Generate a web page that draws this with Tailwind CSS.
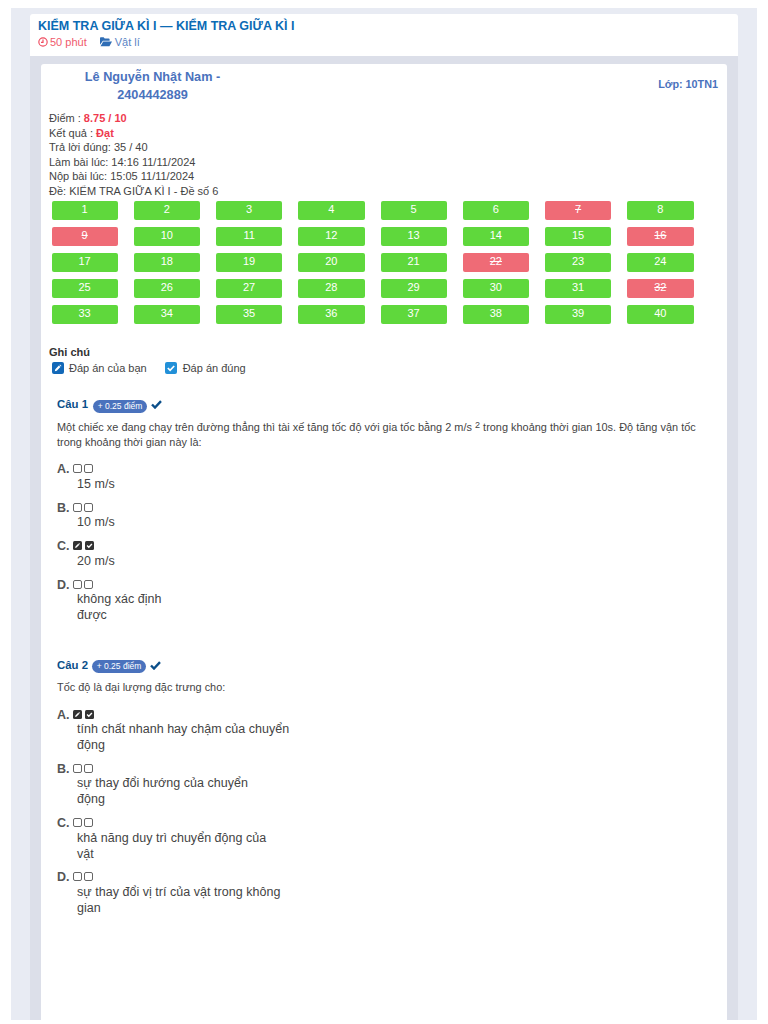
<!DOCTYPE html>
<html lang="en">
<head>
  <meta charset="UTF-8" />
  <title>Kết quả bài thi</title>
  <script src="https://cdn.jsdelivr.net/npm/@tailwindcss/browser@4"></script>
</head>
<body class="bg-white text-[#333] font-['Liberation_Sans',Arial,sans-serif] overflow-hidden">
<div class="ml-[11px] mr-[11px] mt-2 h-[1012px] bg-[#e8ebf3] px-[19px] pt-[6px] overflow-hidden">

  <!-- header -->
  <div class="h-[42px] bg-white rounded-t-[3px] pl-[8px] pt-[4px]">
    <h1 class="text-[12.5px] leading-[16px] font-bold text-[#0b6bb5]">KIỂM TRA GIỮA KÌ I — KIỂM TRA GIỮA KÌ I</h1>
    <div class="flex items-center text-[11px] leading-[14px] mt-[1px]">
      <svg class="w-[10px] h-[10px] mr-[2px]" viewBox="0 0 12 12" fill="none" stroke="#ef4b5f" stroke-width="1.4"><circle cx="6" cy="6" r="5"/><path d="M6 3v3.4H3.6"/></svg>
      <span class="text-[#ef5a6c]">50 phút</span>
      <svg class="w-[12px] h-[10px] ml-[13px] mr-[3px]" viewBox="0 0 14 11" fill="#2f6db5"><path d="M0 1.2C0 .5.5 0 1.2 0h3l1.3 1.4h4.7c.6 0 1 .4 1 1V4H3.4L0 8.6z"/><path d="M3.8 4.8H14l-3 5.6H0.6z"/></svg>
      <span class="text-[#5b83c4]">Vật lí</span>
    </div>
  </div>

  <!-- body -->
  <div class="h-[1000px] bg-[#dcdfe9] pt-[8px] px-[11px]">
    <div class="h-[1000px] bg-white rounded-[3px] pl-[8px] pr-[9px]">

      <!-- student -->
      <div class="flex justify-between">
        <div class="w-[205px] pl-[2px] pt-[4px] text-center text-[12.7px] leading-[18px] font-bold text-[#4a72bd]">Lê Nguyễn Nhật Nam -<br>2404442889</div>
        <div class="pt-[13px] text-[10.8px] leading-[14px] font-bold text-[#4a72bd]">Lớp: 10TN1</div>
      </div>

      <!-- result info -->
      <div class="mt-[7px] text-[11px] leading-[14.6px] text-[#444]">
        <p>Điểm : <b class="text-[#ef3a4e]">8.75 / 10</b></p>
        <p>Kết quả : <b class="text-[#ef3a4e]">Đạt</b></p>
        <p>Trả lời đúng: 35 / 40</p>
        <p>Làm bài lúc: 14:16 11/11/2024</p>
        <p>Nộp bài lúc: 15:05 11/11/2024</p>
        <p>Đề: KIỂM TRA GIỮA KÌ I - Đề số 6</p>
      </div>

      <!-- answer grid -->
      <div class="mt-[2px] ml-[2.5px] w-[642px] grid grid-cols-8 gap-x-[16px] gap-y-[7px] text-[11px] text-white text-center">
        <div class="h-[19px] leading-[17px] rounded-[2px] bg-[#5fd83c]">1</div>
        <div class="h-[19px] leading-[17px] rounded-[2px] bg-[#5fd83c]">2</div>
        <div class="h-[19px] leading-[17px] rounded-[2px] bg-[#5fd83c]">3</div>
        <div class="h-[19px] leading-[17px] rounded-[2px] bg-[#5fd83c]">4</div>
        <div class="h-[19px] leading-[17px] rounded-[2px] bg-[#5fd83c]">5</div>
        <div class="h-[19px] leading-[17px] rounded-[2px] bg-[#5fd83c]">6</div>
        <div class="h-[19px] leading-[17px] rounded-[2px] bg-[#ef6b76] line-through">7</div>
        <div class="h-[19px] leading-[17px] rounded-[2px] bg-[#5fd83c]">8</div>
        <div class="h-[19px] leading-[17px] rounded-[2px] bg-[#ef6b76] line-through">9</div>
        <div class="h-[19px] leading-[17px] rounded-[2px] bg-[#5fd83c]">10</div>
        <div class="h-[19px] leading-[17px] rounded-[2px] bg-[#5fd83c]">11</div>
        <div class="h-[19px] leading-[17px] rounded-[2px] bg-[#5fd83c]">12</div>
        <div class="h-[19px] leading-[17px] rounded-[2px] bg-[#5fd83c]">13</div>
        <div class="h-[19px] leading-[17px] rounded-[2px] bg-[#5fd83c]">14</div>
        <div class="h-[19px] leading-[17px] rounded-[2px] bg-[#5fd83c]">15</div>
        <div class="h-[19px] leading-[17px] rounded-[2px] bg-[#ef6b76] line-through">16</div>
        <div class="h-[19px] leading-[17px] rounded-[2px] bg-[#5fd83c]">17</div>
        <div class="h-[19px] leading-[17px] rounded-[2px] bg-[#5fd83c]">18</div>
        <div class="h-[19px] leading-[17px] rounded-[2px] bg-[#5fd83c]">19</div>
        <div class="h-[19px] leading-[17px] rounded-[2px] bg-[#5fd83c]">20</div>
        <div class="h-[19px] leading-[17px] rounded-[2px] bg-[#5fd83c]">21</div>
        <div class="h-[19px] leading-[17px] rounded-[2px] bg-[#ef6b76] line-through">22</div>
        <div class="h-[19px] leading-[17px] rounded-[2px] bg-[#5fd83c]">23</div>
        <div class="h-[19px] leading-[17px] rounded-[2px] bg-[#5fd83c]">24</div>
        <div class="h-[19px] leading-[17px] rounded-[2px] bg-[#5fd83c]">25</div>
        <div class="h-[19px] leading-[17px] rounded-[2px] bg-[#5fd83c]">26</div>
        <div class="h-[19px] leading-[17px] rounded-[2px] bg-[#5fd83c]">27</div>
        <div class="h-[19px] leading-[17px] rounded-[2px] bg-[#5fd83c]">28</div>
        <div class="h-[19px] leading-[17px] rounded-[2px] bg-[#5fd83c]">29</div>
        <div class="h-[19px] leading-[17px] rounded-[2px] bg-[#5fd83c]">30</div>
        <div class="h-[19px] leading-[17px] rounded-[2px] bg-[#5fd83c]">31</div>
        <div class="h-[19px] leading-[17px] rounded-[2px] bg-[#ef6b76] line-through">32</div>
        <div class="h-[19px] leading-[17px] rounded-[2px] bg-[#5fd83c]">33</div>
        <div class="h-[19px] leading-[17px] rounded-[2px] bg-[#5fd83c]">34</div>
        <div class="h-[19px] leading-[17px] rounded-[2px] bg-[#5fd83c]">35</div>
        <div class="h-[19px] leading-[17px] rounded-[2px] bg-[#5fd83c]">36</div>
        <div class="h-[19px] leading-[17px] rounded-[2px] bg-[#5fd83c]">37</div>
        <div class="h-[19px] leading-[17px] rounded-[2px] bg-[#5fd83c]">38</div>
        <div class="h-[19px] leading-[17px] rounded-[2px] bg-[#5fd83c]">39</div>
        <div class="h-[19px] leading-[17px] rounded-[2px] bg-[#5fd83c]">40</div>
      </div>

      <!-- legend -->
      <div class="mt-[21px] text-[11px] leading-[14px] font-bold text-[#333]">Ghi chú</div>
      <div class="mt-[2px] ml-[3px] flex items-center text-[11px] leading-[14px] text-[#444]">
        <svg class="w-[12px] h-[12px] mr-[5px]" viewBox="0 0 12 12"><rect width="12" height="12" rx="2" fill="#1268b8"/><path d="M2.8 9.2l.5-2 3.6-3.6 1.5 1.5-3.6 3.6z M7.4 3.1l.6-.6 1.5 1.5-.6.6z" fill="#fff"/></svg>
        <span>Đáp án của bạn</span>
        <svg class="w-[12px] h-[12px] ml-[18px] mr-[6px]" viewBox="0 0 12 12"><rect width="12" height="12" rx="2" fill="#2290d8"/><path d="M2.8 6l2.3 2.3 4.1-4.3" fill="none" stroke="#fff" stroke-width="1.7"/></svg>
        <span>Đáp án đúng</span>
      </div>

      <!-- question 1 -->
      <div class="mt-[23px] ml-[8px]">
        <div class="flex items-center h-[14px]">
          <span class="text-[11.4px] font-bold text-[#0b4f8a]">Câu 1</span>
          <span class="ml-[5px] mt-[3px] w-[54px] h-[13px] rounded-full bg-[#4a72bd] text-white text-[8.5px] leading-[13px] text-center">+ 0.25 điểm</span>
          <svg class="ml-[4px] w-[11px] h-[9px]" viewBox="0 0 11 9" fill="none" stroke="#0b4f8a" stroke-width="2.4"><path d="M1 4.5l3 3L10 1.2"/></svg>
        </div>
        <p class="mt-[8px] w-[660px] text-[10.9px] tracking-[0.02px] leading-[15.5px] text-[#444]">Một chiếc xe đang chạy trên đường thẳng thì tài xế tăng tốc độ với gia tốc bằng 2 m/s <span class="inline-block align-top text-[9px] leading-[11px]">2</span> trong khoảng thời gian 10s. Độ tăng vận tốc trong khoảng thời gian này là:</p>

        <div class="mt-[11px] flex items-center h-[14px]">
          <b class="text-[12.5px] text-[#555] mt-[2px]">A.</b>
          <span class="ml-[3px] w-[9px] h-[9px] border border-[#666] rounded-[2px]"></span>
          <span class="ml-[2px] w-[9px] h-[9px] border border-[#666] rounded-[2px]"></span>
        </div>
        <p class="ml-[20px] w-[220px] text-[12.5px] tracking-[0.03px] leading-[16px] text-[#444]">15 m/s</p>

        <div class="mt-[8.5px] flex items-center h-[14px]">
          <b class="text-[12.5px] text-[#555] mt-[2px]">B.</b>
          <span class="ml-[3px] w-[9px] h-[9px] border border-[#666] rounded-[2px]"></span>
          <span class="ml-[2px] w-[9px] h-[9px] border border-[#666] rounded-[2px]"></span>
        </div>
        <p class="ml-[20px] w-[220px] text-[12.5px] tracking-[0.03px] leading-[16px] text-[#444]">10 m/s</p>

        <div class="mt-[8.5px] flex items-center h-[14px]">
          <b class="text-[12.5px] text-[#555] mt-[2px]">C.</b>
          <svg class="ml-[3px] w-[9px] h-[9px]" viewBox="0 0 12 12"><rect width="12" height="12" rx="2" fill="#333"/><path d="M2.8 9.2l.5-2 3.6-3.6 1.5 1.5-3.6 3.6z M7.4 3.1l.6-.6 1.5 1.5-.6.6z" fill="#fff"/></svg>
          <svg class="ml-[3px] w-[9px] h-[9px]" viewBox="0 0 12 12"><rect width="12" height="12" rx="2" fill="#333"/><path d="M2.8 6l2.3 2.3 4.1-4.3" fill="none" stroke="#fff" stroke-width="1.8"/></svg>
        </div>
        <p class="ml-[20px] w-[220px] text-[12.5px] tracking-[0.03px] leading-[16px] text-[#444]">20 m/s</p>

        <div class="mt-[8.5px] flex items-center h-[14px]">
          <b class="text-[12.5px] text-[#555] mt-[2px]">D.</b>
          <span class="ml-[3px] w-[9px] h-[9px] border border-[#666] rounded-[2px]"></span>
          <span class="ml-[2px] w-[9px] h-[9px] border border-[#666] rounded-[2px]"></span>
        </div>
        <p class="ml-[20px] w-[100px] text-[12.5px] tracking-[0.03px] leading-[16px] text-[#444]">không xác định được</p>
      </div>

      <!-- question 2 -->
      <div class="mt-[35px] ml-[8px]">
        <div class="flex items-center h-[14px]">
          <span class="text-[11.4px] font-bold text-[#0b4f8a]">Câu 2</span>
          <span class="ml-[4px] mt-[3px] w-[54px] h-[13px] rounded-full bg-[#4a72bd] text-white text-[8.5px] leading-[13px] text-center">+ 0.25 điểm</span>
          <svg class="ml-[4px] w-[11px] h-[9px]" viewBox="0 0 11 9" fill="none" stroke="#0b4f8a" stroke-width="2.4"><path d="M1 4.5l3 3L10 1.2"/></svg>
        </div>
        <p class="mt-[8px] text-[10.9px] tracking-[0.02px] leading-[15.5px] text-[#444]">Tốc độ là đại lượng đặc trưng cho:</p>

        <div class="mt-[11.5px] flex items-center h-[14px]">
          <b class="text-[12.5px] text-[#555] mt-[2px]">A.</b>
          <svg class="ml-[3px] w-[9px] h-[9px]" viewBox="0 0 12 12"><rect width="12" height="12" rx="2" fill="#333"/><path d="M2.8 9.2l.5-2 3.6-3.6 1.5 1.5-3.6 3.6z M7.4 3.1l.6-.6 1.5 1.5-.6.6z" fill="#fff"/></svg>
          <svg class="ml-[3px] w-[9px] h-[9px]" viewBox="0 0 12 12"><rect width="12" height="12" rx="2" fill="#333"/><path d="M2.8 6l2.3 2.3 4.1-4.3" fill="none" stroke="#fff" stroke-width="1.8"/></svg>
        </div>
        <p class="ml-[20px] w-[220px] text-[12.5px] tracking-[0.03px] leading-[16px] text-[#444]">tính chất nhanh hay chậm của chuyển động</p>

        <div class="mt-[8px] flex items-center h-[14px]">
          <b class="text-[12.5px] text-[#555] mt-[2px]">B.</b>
          <span class="ml-[3px] w-[9px] h-[9px] border border-[#666] rounded-[2px]"></span>
          <span class="ml-[2px] w-[9px] h-[9px] border border-[#666] rounded-[2px]"></span>
        </div>
        <p class="ml-[20px] w-[190px] text-[12.5px] tracking-[0.03px] leading-[16px] text-[#444]">sự thay đổi hướng của chuyển động</p>

        <div class="mt-[8.5px] flex items-center h-[14px]">
          <b class="text-[12.5px] text-[#555] mt-[2px]">C.</b>
          <span class="ml-[3px] w-[9px] h-[9px] border border-[#666] rounded-[2px]"></span>
          <span class="ml-[2px] w-[9px] h-[9px] border border-[#666] rounded-[2px]"></span>
        </div>
        <p class="ml-[20px] w-[200px] text-[12.5px] tracking-[0.03px] leading-[16px] text-[#444]">khả năng duy trì chuyển động của vật</p>

        <div class="mt-[8px] flex items-center h-[14px]">
          <b class="text-[12.5px] text-[#555] mt-[2px]">D.</b>
          <span class="ml-[3px] w-[9px] h-[9px] border border-[#666] rounded-[2px]"></span>
          <span class="ml-[2px] w-[9px] h-[9px] border border-[#666] rounded-[2px]"></span>
        </div>
        <p class="ml-[20px] w-[220px] text-[12.5px] tracking-[0.03px] leading-[16px] text-[#444]">sự thay đổi vị trí của vật trong không gian</p>
      </div>

    </div>
  </div>
</div>
</body>
</html>
